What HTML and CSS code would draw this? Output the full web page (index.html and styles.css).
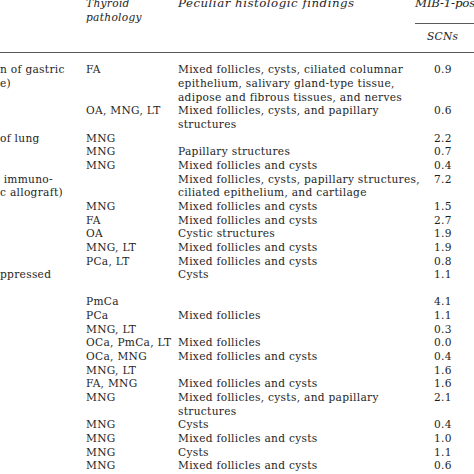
FILE: index.html
```html
<!DOCTYPE html>
<html>
<head>
<meta charset="utf-8">
<link rel="stylesheet" href="styles.css">
</head>
<body>
<div class="table">
  <div class="head">
    <div class="hc1"></div>
    <div class="hc2 it">Thyroid<br>pathology</div>
    <div class="hc3 it wide">Peculiar histologic findings</div>
    <div class="hc4">
      <div class="mib it wide">MIB-1-pos</div>
      <div class="scn it">SCNs</div>
    </div>
  </div>
  <div class="body">
    <div class="row"><div class="c1">n of gastric<br>e)</div><div>FA</div><div>Mixed follicles, cysts, ciliated columnar<br>epithelium, salivary gland-type tissue,<br>adipose and fibrous tissues, and nerves</div><div class="v">0.9</div></div>
    <div class="row"><div class="c1"></div><div>OA, MNG, LT</div><div>Mixed follicles, cysts, and papillary<br>structures</div><div class="v">0.6</div></div>
    <div class="row"><div class="c1">of lung</div><div>MNG</div><div></div><div class="v">2.2</div></div>
    <div class="row"><div class="c1"></div><div>MNG</div><div>Papillary structures</div><div class="v">0.7</div></div>
    <div class="row"><div class="c1"></div><div>MNG</div><div>Mixed follicles and cysts</div><div class="v">0.4</div></div>
    <div class="row"><div class="c1">&nbsp;immuno-<br>c allograft)</div><div></div><div>Mixed follicles, cysts, papillary structures,<br>ciliated epithelium, and cartilage</div><div class="v">7.2</div></div>
    <div class="row"><div class="c1"></div><div>MNG</div><div>Mixed follicles and cysts</div><div class="v">1.5</div></div>
    <div class="row"><div class="c1"></div><div>FA</div><div>Mixed follicles and cysts</div><div class="v">2.7</div></div>
    <div class="row"><div class="c1"></div><div>OA</div><div>Cystic structures</div><div class="v">1.9</div></div>
    <div class="row"><div class="c1"></div><div>MNG, LT</div><div>Mixed follicles and cysts</div><div class="v">1.9</div></div>
    <div class="row"><div class="c1"></div><div>PCa, LT</div><div>Mixed follicles and cysts</div><div class="v">0.8</div></div>
    <div class="row"><div class="c1">ppressed<br>&nbsp;</div><div></div><div>Cysts</div><div class="v">1.1</div></div>
    <div class="row"><div class="c1"></div><div>PmCa</div><div></div><div class="v">4.1</div></div>
    <div class="row"><div class="c1"></div><div>PCa</div><div>Mixed follicles</div><div class="v">1.1</div></div>
    <div class="row"><div class="c1"></div><div>MNG, LT</div><div></div><div class="v">0.3</div></div>
    <div class="row"><div class="c1"></div><div>OCa, PmCa, LT</div><div>Mixed follicles</div><div class="v">0.0</div></div>
    <div class="row"><div class="c1"></div><div>OCa, MNG</div><div>Mixed follicles and cysts</div><div class="v">0.4</div></div>
    <div class="row"><div class="c1"></div><div>MNG, LT</div><div></div><div class="v">1.6</div></div>
    <div class="row"><div class="c1"></div><div>FA, MNG</div><div>Mixed follicles and cysts</div><div class="v">1.6</div></div>
    <div class="row"><div class="c1"></div><div>MNG</div><div>Mixed follicles, cysts, and papillary<br>structures</div><div class="v">2.1</div></div>
    <div class="row"><div class="c1"></div><div>MNG</div><div>Cysts</div><div class="v">0.4</div></div>
    <div class="row"><div class="c1"></div><div>MNG</div><div>Mixed follicles and cysts</div><div class="v">1.0</div></div>
    <div class="row"><div class="c1"></div><div>MNG</div><div>Cysts</div><div class="v">1.1</div></div>
    <div class="row"><div class="c1"></div><div>MNG</div><div>Mixed follicles and cysts</div><div class="v">0.6</div></div>
  </div>
</div>
</body>
</html>
```

FILE: styles.css
```css
html, body {
  margin: 0;
  padding: 0;
  background: #ffffff;
  overflow: hidden;
}
body {
  width: 474px;
  height: 474px;
}
.table {
  margin-top: -3px;
  font-family: "DejaVu Serif Condensed", "DejaVu Serif", "Liberation Serif", serif;
  font-stretch: semi-condensed;
  font-size: 11.8px;
  letter-spacing: 0.3px;
  line-height: 13.66px;
  color: #1e1e1e;
  white-space: nowrap;
}
.it {
  font-style: italic;
}
.wide {
  font-family: "DejaVu Serif", "Liberation Serif", serif;
  font-stretch: normal;
  letter-spacing: 0.5px;
}
.head {
  display: grid;
  grid-template-columns: 86px 92px 237px 1fr;
  border-bottom: 1px solid #5a5a5a;
}
.hc4 {
  display: flex;
  flex-direction: column;
}
.mib {
  padding-bottom: 12px;
  border-bottom: 1px solid #5a5a5a;
  letter-spacing: -0.2px;
}
.scn {
  padding: 6px 0 9px 12px;
}
.body {
  padding-top: 10px;
}
.row {
  display: grid;
  grid-template-columns: 86px 92px 237px 1fr;
}
.v {
  padding-left: 19px;
}
```
